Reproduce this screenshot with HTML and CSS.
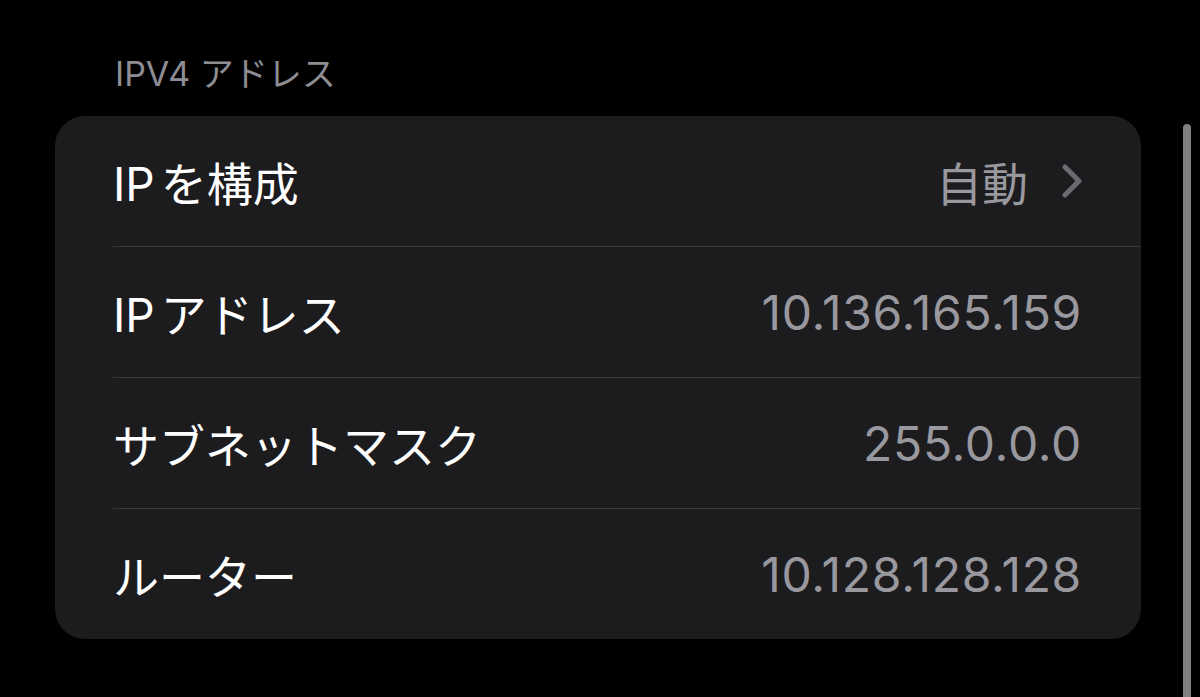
FILE: index.html
```html
<!DOCTYPE html>
<html lang="ja">
<head>
<meta charset="utf-8">
<title>IPV4 アドレス</title>
<link rel="stylesheet" href="styles.css">
</head>
<body>
<main class="page">
  <div class="section-header">IPV4 アドレス</div>
  <section class="card">
    <div class="row">
      <div class="row-inner">
        <span class="label"><span class="latin">IP</span>を構成</span>
        <span class="value with-chevron">自動
          <svg class="chevron" viewBox="0 0 20 34" width="20" height="34" aria-hidden="true">
            <polyline points="3,3 17,17 3,31" fill="none" stroke="currentColor" stroke-width="5" stroke-linecap="round" stroke-linejoin="round"/>
          </svg>
        </span>
      </div>
    </div>
    <div class="row">
      <div class="row-inner">
        <span class="label"><span class="latin">IP</span>アドレス</span>
        <span class="value">10.136.165.159</span>
      </div>
    </div>
    <div class="row">
      <div class="row-inner">
        <span class="label">サブネットマスク</span>
        <span class="value">255.0.0.0</span>
      </div>
    </div>
    <div class="row">
      <div class="row-inner">
        <span class="label">ルーター</span>
        <span class="value">10.128.128.128</span>
      </div>
    </div>
  </section>
</main>
<div class="scroll-indicator"></div>
</body>
</html>
```
FILE: styles.css
```css
html, body {
  margin: 0;
  padding: 0;
  background: #000;
  height: 100%;
  overflow: hidden;
}

body {
  font-family: Inter, "Noto Sans CJK JP", sans-serif;
  color: #fff;
}

.page {
  padding: 54px 59px 0 55px;
}

.section-header {
  padding-left: 60px;
  font-size: 34px;
  line-height: 40px;
  height: 40px;
  color: #8d8d93;
  margin-bottom: 22px;
}

.card {
  background: #1c1c1e;
  border-radius: 30px;
  overflow: hidden;
}

.row {
  padding-left: 58px;
}

.row-inner {
  display: flex;
  align-items: center;
  justify-content: space-between;
  height: 130px;
  padding-right: 59px;
  border-bottom: 1px solid #38383a;
}

.row:last-child .row-inner {
  border-bottom: none;
}

.label {
  font-size: 46px;
  color: #fff;
}

.latin {
  margin-right: 6px;
}

.value {
  font-size: 48px;
  color: #98989e;
  letter-spacing: 0.7px;
}

.with-chevron {
  display: flex;
  align-items: center;
  gap: 34px;
  font-size: 46px;
  letter-spacing: 0;
}

.chevron {
  color: #6b6b70;
  display: block;
}

.scroll-indicator {
  position: absolute;
  left: 1183px;
  top: 124px;
  width: 8px;
  height: 600px;
  border-radius: 4px;
  background: #808080;
}
```
